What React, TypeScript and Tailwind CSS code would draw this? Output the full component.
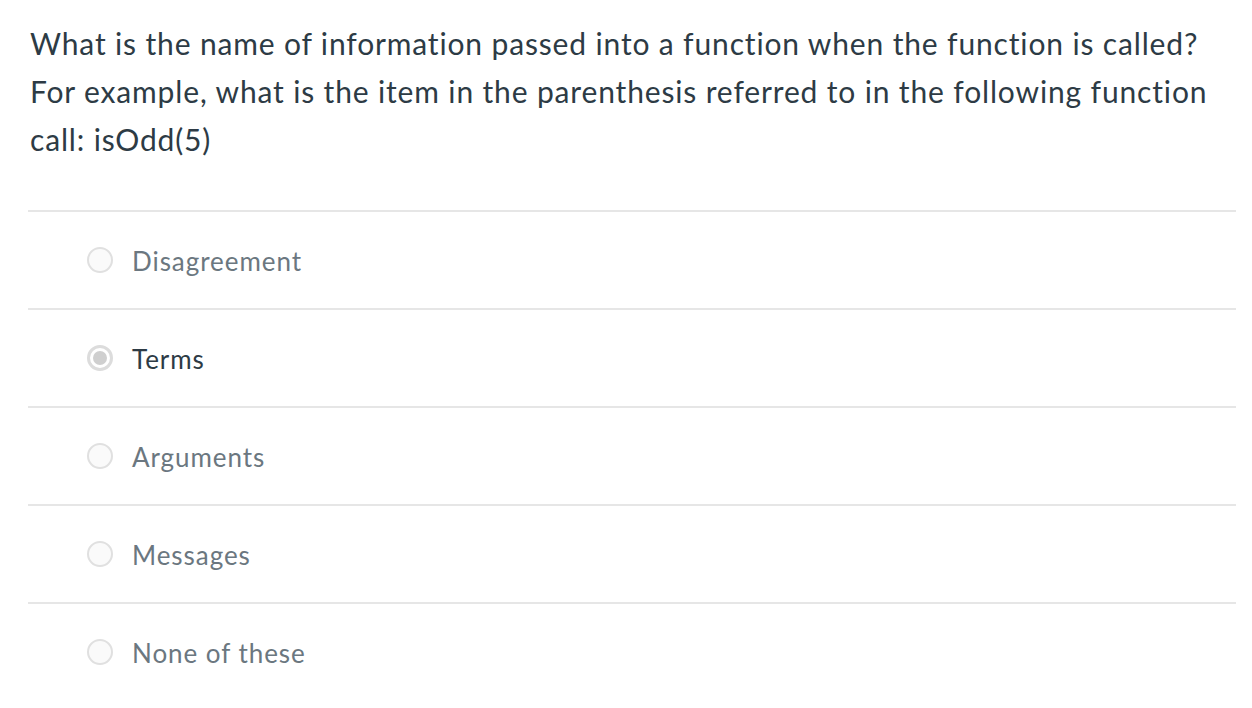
import React from "react";

const options = [
  { label: "Disagreement", selected: false },
  { label: "Terms", selected: true },
  { label: "Arguments", selected: false },
  { label: "Messages", selected: false },
  { label: "None of these", selected: false },
];

function Radio({ selected }: { selected: boolean }) {
  if (selected) {
    return (
      <span className="flex h-[26px] w-[26px] items-center justify-center rounded-full border-[3px] border-[#dcdcdc] bg-white">
        <span className="h-[14px] w-[14px] rounded-full bg-[#cfcfcf]" />
      </span>
    );
  }
  return (
    <span className="block h-[26px] w-[26px] rounded-full border-2 border-[#e0e0e0] bg-[#fafafa]" />
  );
}

export default function App() {
  return (
    <div className="min-h-[708px] w-[1252px] bg-white font-['Lato','Open_Sans',sans-serif]">
      <div className="pl-[30px] pr-[16px] pt-[19px]">
        <p className="text-[30px] leading-[48px] tracking-[0.85px] text-[#2d3b45]">
          What is the name of information passed into a function when the function is called?
          For example, what is the item in the parenthesis referred to in the following function
          call: isOdd(5)
        </p>
      </div>
      <div className="ml-[28px] mr-[16px] mt-[47px]">
        {options.map((o) => (
          <div
            key={o.label}
            className="flex h-[98px] items-center border-t-2 border-[#e6e6e6] pl-[59px]"
          >
            <Radio selected={o.selected} />
            <span
              className={
                "ml-[19px] mt-[3px] text-[26px] tracking-[0.95px] " +
                (o.selected ? "text-[#2d3b45]" : "text-[#6b7780]")
              }
            >
              {o.label}
            </span>
          </div>
        ))}
      </div>
    </div>
  );
}
